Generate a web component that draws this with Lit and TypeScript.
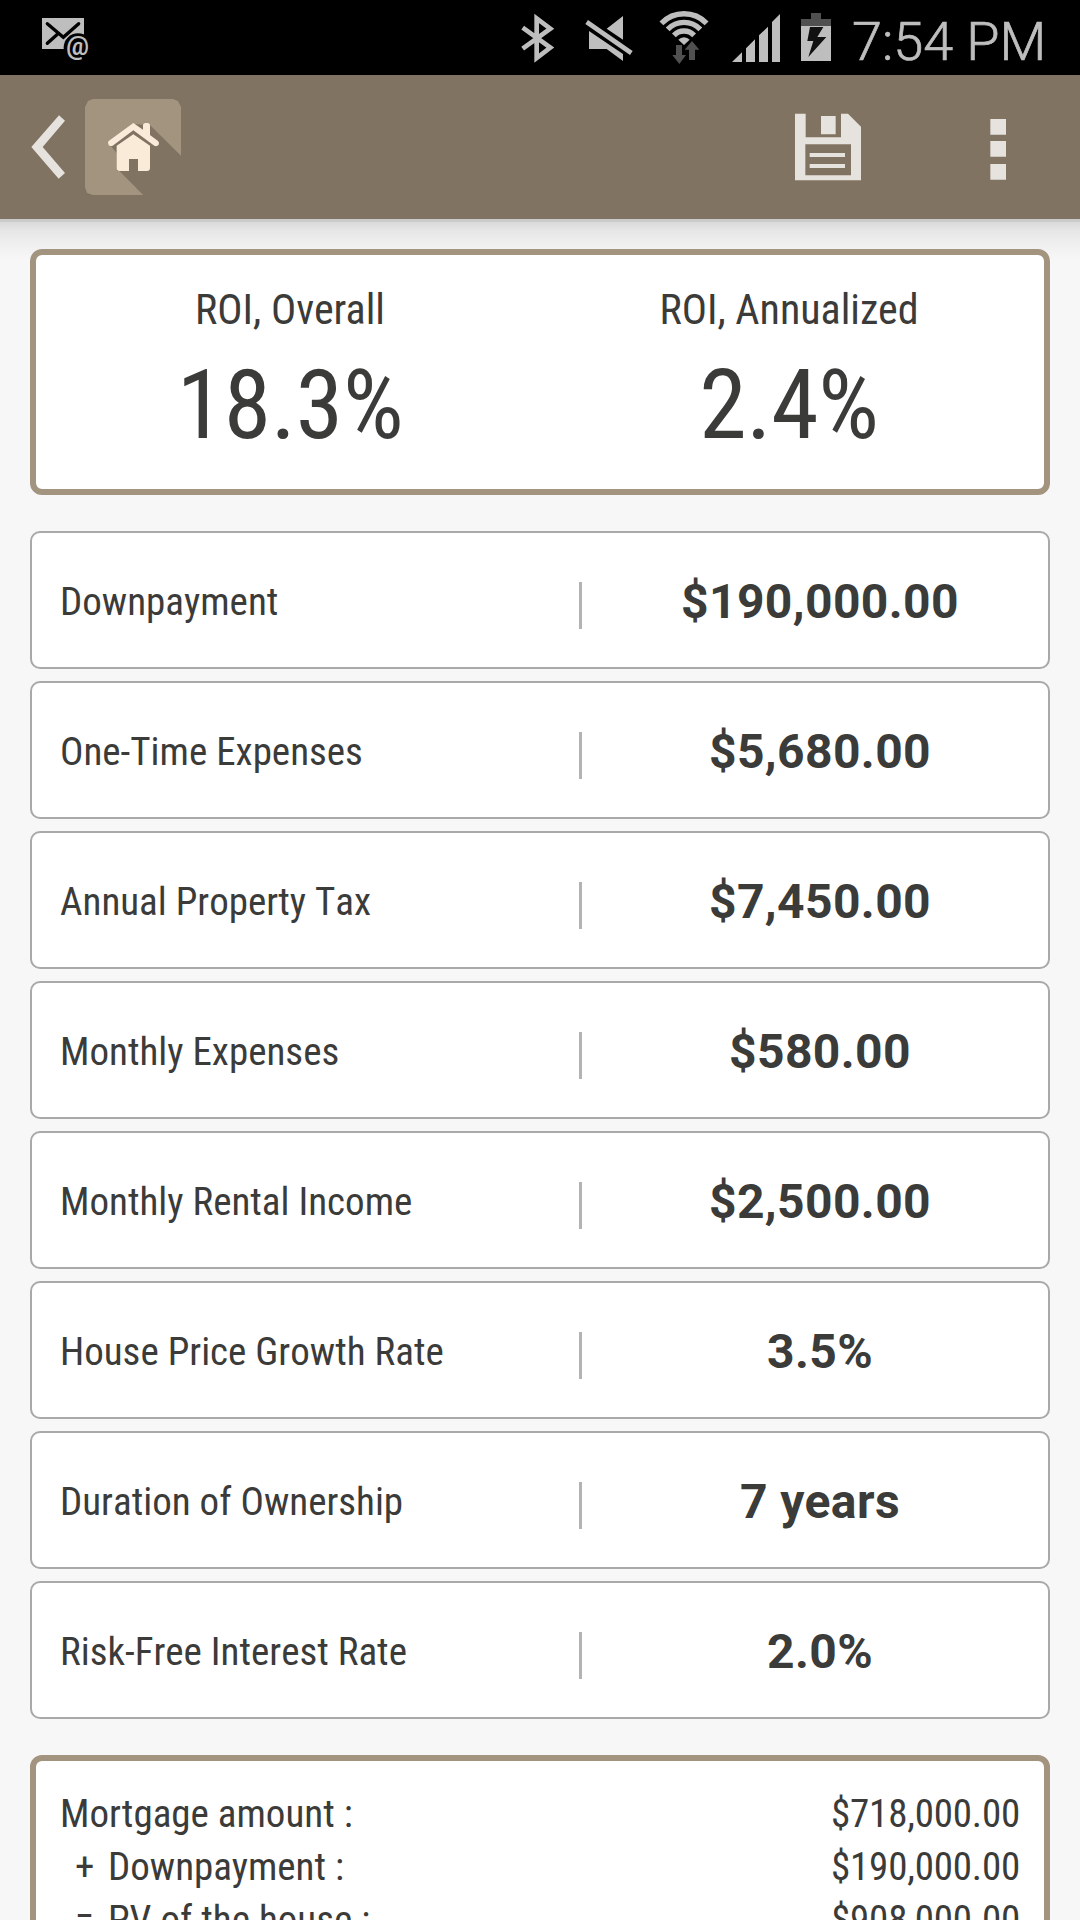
import { LitElement, html, css, svg } from "lit";
import { customElement, property } from "lit/decorators.js";

const ROWS: [string, string][] = [
  ["Downpayment", "$190,000.00"],
  ["One-Time Expenses", "$5,680.00"],
  ["Annual Property Tax", "$7,450.00"],
  ["Monthly Expenses", "$580.00"],
  ["Monthly Rental Income", "$2,500.00"],
  ["House Price Growth Rate", "3.5%"],
  ["Duration of Ownership", "7 years"],
  ["Risk-Free Interest Rate", "2.0%"],
];

const SUMMARY: [string, string, string][] = [
  ["", "Mortgage amount :", "$718,000.00"],
  ["+", "Downpayment :", "$190,000.00"],
  ["=", "PV of the house :", "$908,000.00"],
];

// Icons are drawn on a grid of three units per pixel.
const arc = (r: number) => {
  const d = r * Math.SQRT1_2 * 1.02;
  return svg`<path d="M${552 - d} ${135 - r * 0.69}A${r} ${r} 0 0 1 ${552 + d} ${135 - r * 0.69}" fill="none" stroke="#bebebe" stroke-width="16"/>`;
};

@customElement("status-bar")
class StatusBar extends LitElement {
  static styles = css`
    :host {
      display: flex;
      height: 75px;
      background: #000;
      color: #bebebe;
      justify-content: space-between;
    }
    svg { display: block; height: 75px; }
    .mail { width: 60px; margin-left: 36px; }
    .right { display: flex; }
    .icons { width: 340px; }
    .time {
      font: 300 54px/75px Roboto, sans-serif;
      font-stretch: 100%;
      -webkit-text-stroke: 0.7px #bebebe;
      width: 240px;
      box-sizing: border-box;
      padding: 4px 0 0 12px;
      white-space: nowrap;
    }
    .at { font: 700 76px Roboto, sans-serif; font-stretch: 100%; }
  `;
  render() {
    return html`
      <svg class="mail" viewBox="108 0 180 225">
        <path d="M126 54H252V147H126Z" fill="#bebebe" />
        <path d="M142 71L190 112L236 71M142 130L174 101" fill="none" stroke="#000" stroke-width="10" stroke-linecap="round" />
        <circle cx="234" cy="143" r="43" fill="#000" />
        <text class="at" x="233" y="164" text-anchor="middle" fill="#bebebe">@</text>
      </svg>
      <div class="right">
        <svg class="icons" viewBox="0 0 1020 225">
          <path d="M68 83L151 143L110 174V55L151 86L68 146" fill="none" stroke="#bebebe" stroke-width="14" stroke-miterlimit="8" />
          <path d="M267 93L369 162V183L320 147H267ZM369 48V119L320 86Z" fill="#bebebe" />
          <path d="M260 66L394 159" stroke="#bebebe" stroke-width="14" />
          ${arc(94)}${arc(68)}${arc(42)}
          <path d="M552 135L535 119A23 23 0 0 1 569 119Z" fill="#bebebe" />
          <path d="M528 135H546V165H558L538 192L517 165H528ZM576 123L598 149H585V180H567V149H554Z" fill="#505050" />
          <path d="M696 186L726 157V186ZM738 186V145L765 118V186ZM777 186V106L804 80V186ZM816 186V66L840 42V186Z" fill="#bebebe" />
          <path d="M903 57H933V39H963V57H993V78H903Z" fill="#505050" />
          <path d="M903 78H993V183H903Z" fill="#bebebe" />
          <path d="M930 81H970L952 111H979L925 171L940 123H922Z" fill="#111" />
        </svg>
        <div class="time">7:54 PM</div>
      </div>
    `;
  }
}

@customElement("action-bar")
class ActionBar extends LitElement {
  static styles = css`
    :host {
      display: flex;
      height: 144px;
      background: #807362;
      justify-content: space-between;
    }
    svg { display: block; height: 144px; }
    .nav { width: 200px; }
    .tools { width: 300px; }
  `;
  render() {
    return html`
      <svg class="nav" viewBox="0 225 600 432">
        <path d="M177 346L195 362L128 441L195 519L176 536L94 441Z" fill="#e6e2de" />
        <path d="M279 297H519L534 303L543 321V468L450 376L350 513H360L430 585H279L261 579L255 561V321L264 303Z" fill="#a3947f" />
        <path d="M330 435L400 372L450 376L543 468V585H430L350 505V459Z" fill="#807362" />
        <path d="M400 369L429 389V377Q429 369 437 369H442Q450 369 450 377V405L474 423Q479 428 476 434Q470 441 463 437L400 391L338 437Q330 440 326 435Q322 428 326 423Z" fill="#faebd9" />
        <path d="M400 403L450 437V504Q450 513 441 513H414V477H387V513H359Q350 513 350 504V437Z" fill="#faebd9" />
      </svg>
      <svg class="tools" viewBox="0 225 900 432">
        <g fill="#e6e2de">
          <path fill-rule="evenodd" d="M45 341H77V412H183V341H204L243 380V541H45ZM76 433V526H213V433Z" />
          <path d="M123 348H167V403H123ZM89 459H195V471H89ZM89 492H195V504H89Z" />
          <path d="M631 357H678V404H631ZM631 423H678V470H631ZM631 492H678V539H631Z" />
        </g>
      </svg>
    `;
  }
}

@customElement("value-row")
class ValueRow extends LitElement {
  @property() label = "";
  @property() value = "";
  static styles = css`
    :host {
      display: grid;
      grid-template-columns: 547px 3px 1fr;
      box-sizing: border-box;
      height: 138px;
      border: 2px solid #a9a9a9;
      border-radius: 10px;
      background: #fff;
      color: #3b3b39;
    }
    .label {
      font-size: 39px;
      line-height: 138px;
      padding-left: 28px;
      font-kerning: none;
      white-space: nowrap;
    }
    .rule { height: 47px; margin-top: 49px; background: #b3b3b3; }
    .value {
      font: 700 48px/137px Roboto, sans-serif;
      font-stretch: 100%;
      letter-spacing: 0.4px;
      text-align: center;
      padding-left: 10px;
      white-space: nowrap;
    }
  `;
  render() {
    return html`
      <div class="label">${this.label}</div>
      <div class="rule"></div>
      <div class="value">${this.value}</div>
    `;
  }
}

@customElement("app-root")
class AppRoot extends LitElement {
  static styles = css`
    :host {
      display: flex;
      flex-direction: column;
      width: 1080px;
      height: 1920px;
      overflow: hidden;
      background: #f7f7f7;
      color: #3b3b39;
      font-family: "Roboto Condensed", Roboto, sans-serif;
      font-stretch: 75%;
    }
    .main {
      display: flex;
      flex-direction: column;
      flex: 1;
      min-height: 0;
      padding: 30px 30px 0;
      gap: 36px;
      background: linear-gradient(#cbcbcb 0 3px, #dadada 3px, #e7e7e7 12px, #f0f0f0 26px, #f7f7f7 40px);
    }
    .card {
      box-sizing: border-box;
      flex: none;
      border: 6px solid #a3947f;
      border-radius: 12px;
      background: #fff;
    }
    .roi {
      display: grid;
      grid-template-columns: 500px 498px;
      height: 246px;
      padding: 0 4px;
      text-align: center;
      white-space: nowrap;
    }
    .name { font-size: 42px; line-height: 50px; margin-top: 30px; }
    .figure { font-size: 96px; line-height: 112px; margin-top: 14px; letter-spacing: -0.3px; }
    .rows { display: flex; flex-direction: column; gap: 12px; flex: none; }
    .summary {
      height: 260px;
      padding: 27px 24px 0;
      font-size: 39px;
      line-height: 53px;
    }
    .line { display: flex; white-space: nowrap; }
    .sign { width: 33px; padding-left: 15px; }
    .amount { margin-left: auto; letter-spacing: -0.2px; }
  `;
  render() {
    return html`
      <status-bar></status-bar>
      <action-bar></action-bar>
      <div class="main">
        <div class="card roi">
          <div>
            <div class="name">ROI, Overall</div>
            <div class="figure">18.3%</div>
          </div>
          <div>
            <div class="name">ROI, Annualized</div>
            <div class="figure">2.4%</div>
          </div>
        </div>
        <div class="rows">
          ${ROWS.map(([l, v]) => html`<value-row .label=${l} .value=${v}></value-row>`)}
        </div>
        <div class="card summary">
          ${SUMMARY.map(
            ([s, l, v]) => html`<div class="line">
              ${s ? html`<span class="sign">${s}</span>` : ""}<span>${l}</span><span class="amount">${v}</span>
            </div>`
          )}
        </div>
      </div>
    `;
  }
}
